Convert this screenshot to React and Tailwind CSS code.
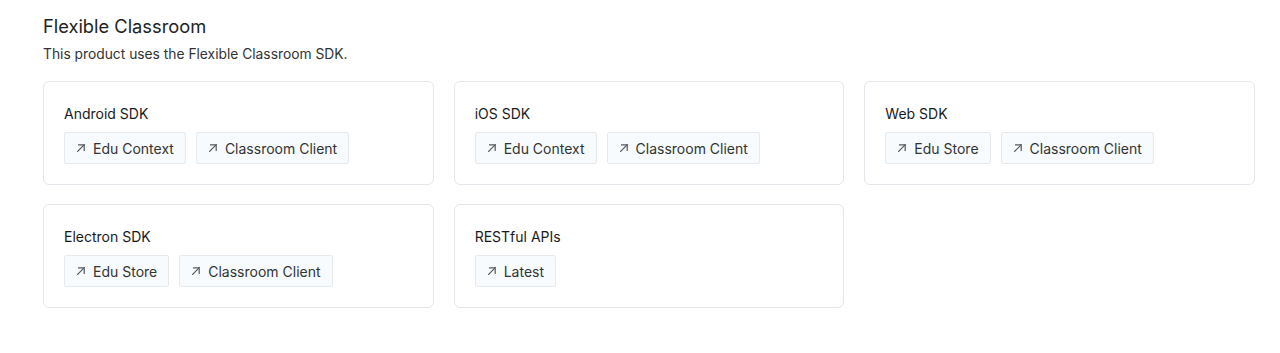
import React from "react";

const ArrowIcon = () => (
  <svg width="8" height="8" viewBox="0 0 8 8" fill="none" className="shrink-0">
    <path d="M0.6 7.4 L7.2 0.8" stroke="#555b61" strokeWidth="1.2" strokeLinecap="square" />
    <path d="M1.6 0.8 H7.2 V6.4" stroke="#555b61" strokeWidth="1.2" strokeLinecap="square" />
  </svg>
);

const cards = [
  { title: "Android SDK", links: ["Edu Context", "Classroom Client"] },
  { title: "iOS SDK", links: ["Edu Context", "Classroom Client"] },
  { title: "Web SDK", links: ["Edu Store", "Classroom Client"] },
  { title: "Electron SDK", links: ["Edu Store", "Classroom Client"] },
  { title: "RESTful APIs", links: ["Latest"] },
];

export default function App() {
  return (
    <div
      className="min-h-[353px] bg-white pl-[43px] pt-[12px]"
      style={{ fontFamily: "Inter, 'Noto Sans', sans-serif" }}
    >
      <h2 className="text-[18.3px] leading-[28px] text-[#222] font-normal">Flexible Classroom</h2>
      <p className="mt-[4px] text-[13.8px] leading-[20px] text-[#333]">
        This product uses the Flexible Classroom SDK.
      </p>
      <div className="mt-[17px] grid w-[1212px] grid-cols-3 gap-x-[20px] gap-y-[19px]">
        {cards.map((c) => (
          <div
            key={c.title}
            className="rounded-[6px] border border-[#e3e6ea] bg-white px-[20px] pt-[22px] pb-[20px]"
          >
            <div className="text-[14px] leading-[20px] text-[#1a1a1a]">{c.title}</div>
            <div className="mt-[8px] flex gap-[10px]">
              {c.links.map((l) => (
                <a
                  key={l}
                  className="flex h-[32px] items-center gap-[8px] rounded-[2px] border border-[#e6eaee] bg-[#f7fbfd] pl-[12px] pr-[11px] text-[14px] text-[#333]"
                >
                  <ArrowIcon />
                  <span>{l}</span>
                </a>
              ))}
            </div>
          </div>
        ))}
      </div>
    </div>
  );
}
